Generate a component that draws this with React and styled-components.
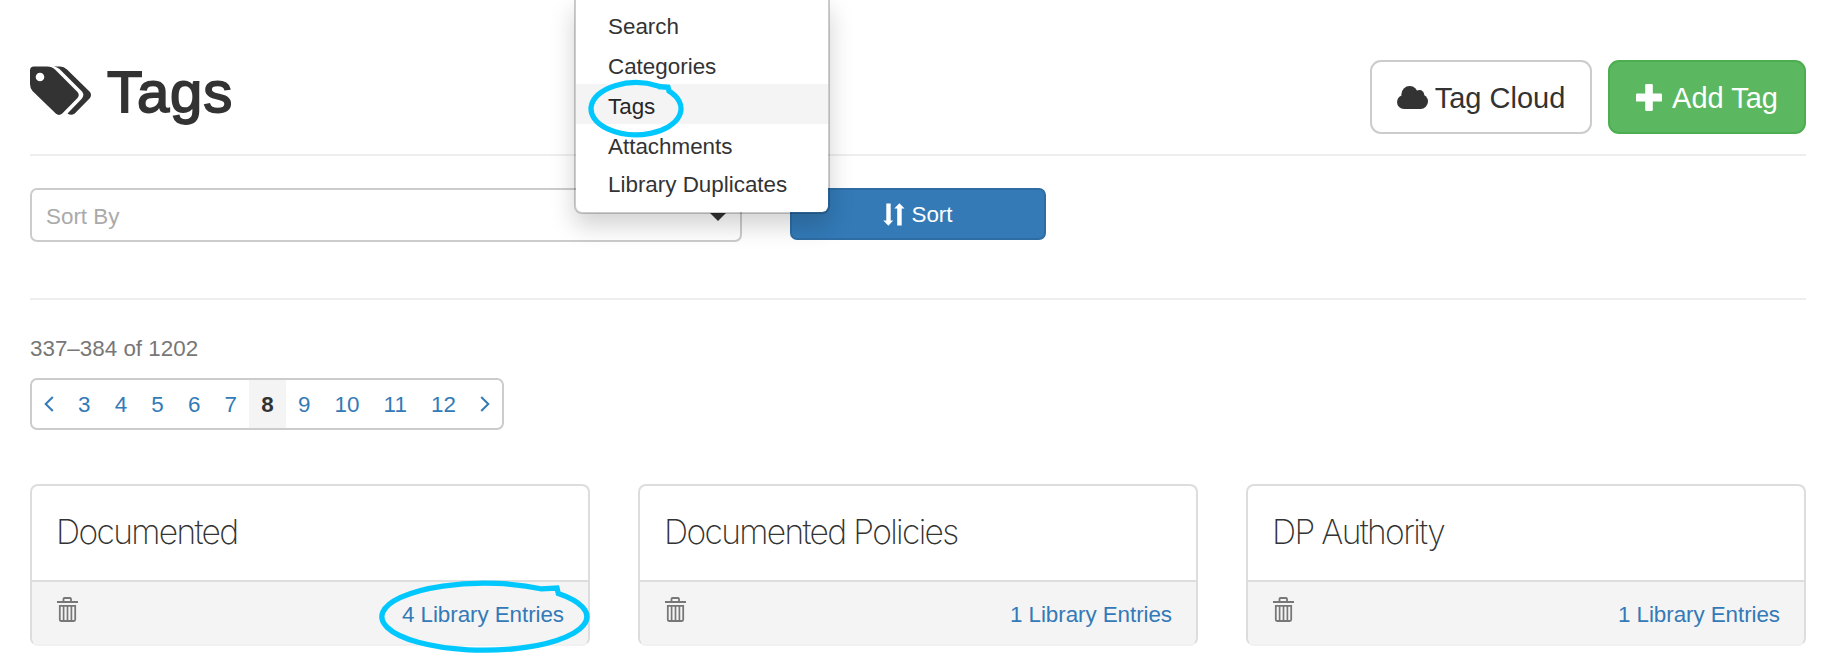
import React from 'react';
import styled, { createGlobalStyle } from 'styled-components';

const colors = {
  text: '#333',
  muted: '#777',
  placeholder: '#aaa',
  link: '#337ab7',
  primary: '#337ab7',
  primaryBorder: '#2e6da4',
  success: '#5cb860',
  successBorder: '#4cae50',
  border: '#ccc',
  cardBorder: '#ddd',
  rule: '#eee',
  shade: '#f4f4f4',
  marker: '#00c8ff',
};

const GlobalStyle = createGlobalStyle`
  * {
    box-sizing: border-box;
  }

  body {
    margin: 0;
    background: #fff;
    color: ${colors.text};
    font-family: "Liberation Sans", Arial, sans-serif;
    font-size: 22.4px;
    overflow: hidden;
    -webkit-font-smoothing: antialiased;
  }
`;

const Page = styled.main`
  position: relative;
  height: 666px;
  padding: 0 18px 0 30px;
  overflow: hidden;
`;

const Header = styled.header`
  display: flex;
  justify-content: space-between;
  height: 156px;
  border-bottom: 2px solid ${colors.rule};
`;

const Title = styled.h1`
  display: flex;
  align-items: center;
  gap: 16px;
  height: 80px;
  margin: 52px 0 0;
  font-size: 58px;
  font-weight: 400;
  letter-spacing: 0.9px;
  line-height: 80px;
  -webkit-text-stroke: 1.8px ${colors.text};

  svg {
    margin-top: -3px;
  }
`;

const Actions = styled.div`
  display: flex;
  gap: 16px;
  padding-top: 60px;
`;

const ActionButton = styled.button`
  display: flex;
  align-items: center;
  justify-content: center;
  gap: ${({ $gap }) => $gap}px;
  width: ${({ $width }) => $width}px;
  height: 74px;
  padding: 0;
  border: 2px solid ${({ $success }) => ($success ? colors.successBorder : colors.border)};
  border-radius: 11px;
  background: ${({ $success }) => ($success ? colors.success : '#fff')};
  color: ${({ $success }) => ($success ? '#fff' : colors.text)};
  font-family: inherit;
  font-size: 29px;
  line-height: 34px;

  span {
    padding-top: 2px;
  }
`;

const Filters = styled.section`
  display: flex;
  gap: 48px;
  height: 144px;
  padding-top: 32px;
  border-bottom: 2px solid ${colors.rule};
`;

const Select = styled.div`
  display: flex;
  align-items: center;
  justify-content: space-between;
  width: 712px;
  height: 54px;
  padding: 3px 14px 0;
  border: 2px solid ${colors.border};
  border-radius: 7px;
  color: ${colors.placeholder};
`;

const Caret = styled.i`
  border: 8px solid transparent;
  border-top-color: ${colors.text};
  border-bottom: 0;
`;

const SortButton = styled.button`
  display: flex;
  align-items: center;
  justify-content: center;
  gap: 6px;
  width: 256px;
  height: 52px;
  padding: 0;
  border: 2px solid ${colors.primaryBorder};
  border-radius: 7px;
  background: ${colors.primary};
  color: #fff;
  font-family: inherit;
  font-size: 22.4px;

  span {
    padding-top: 2px;
  }
`;

const Count = styled.p`
  margin: 35px 0 15px;
  color: ${colors.muted};
  line-height: 28px;
`;

const Pagination = styled.nav`
  display: flex;
  width: 474px;
  height: 52px;
  border: 2px solid ${colors.border};
  border-radius: 7px;
`;

const PageLink = styled.a`
  padding: 0 12.1px;
  background: ${({ $active }) => ($active ? colors.shade : 'transparent')};
  color: ${({ $active }) => ($active ? colors.text : colors.link)};
  font-weight: ${({ $active }) => ($active ? 700 : 400)};
  line-height: 49px;
  height: 48px;
`;

const PageArrow = styled.a`
  display: flex;
  align-items: center;
  justify-content: center;
  width: 34px;
  color: ${colors.link};
`;

const Cards = styled.section`
  display: grid;
  grid-template-columns: repeat(3, 560px);
  gap: 48px;
  margin-top: 54px;
`;

const Card = styled.article`
  height: 162px;
  border: 2px solid ${colors.cardBorder};
  border-bottom-color: #f1f1f1;
  border-radius: 8px;
  overflow: hidden;
`;

const CardTitle = styled.h2`
  height: 94px;
  margin: 0;
  padding-left: 24px;
  font-family: Inter, "Liberation Sans", sans-serif;
  font-size: 33.6px;
  font-weight: 200;
  letter-spacing: -1.65px;
  line-height: 92px;
`;

const CardFooter = styled.footer`
  display: flex;
  justify-content: space-between;
  height: 64px;
  padding: 0 24px 0 25px;
  border-top: 2px solid ${colors.cardBorder};
  background: ${colors.shade};
  color: ${colors.muted};

  svg {
    margin-top: 15px;
  }
`;

const EntriesLink = styled.a`
  color: ${colors.link};
  letter-spacing: -0.06px;
  line-height: 65px;
`;

const Menu = styled.ul`
  position: absolute;
  top: -2px;
  left: 574px;
  width: 256px;
  height: 216px;
  margin: 0;
  padding: 4px 0 0;
  border: 2px solid rgba(0, 0, 0, 0.2);
  border-radius: 0 0 8px 8px;
  background: #fff;
  background-clip: padding-box;
  box-shadow: 0 12px 24px rgba(0, 0, 0, 0.175);
  list-style: none;
`;

const MenuItem = styled.li`
  height: ${({ $last }) => ($last ? 36 : 40)}px;
  padding: 5px 0 0 32px;
  background: ${({ $active }) => ($active ? colors.shade : 'transparent')};
  color: ${({ $active }) => ($active ? '#262626' : colors.text)};
  line-height: ${({ $last }) => ($last ? 32 : 36)}px;
`;

const Marker = styled.svg`
  position: absolute;
  top: ${({ $top }) => $top}px;
  left: ${({ $left }) => $left}px;
  fill: none;
  stroke: ${colors.marker};
  stroke-width: 5.3;
`;

const TagsIcon = () => (
  <svg width="61" height="49" viewBox="0 0 61 49" fill="currentColor" stroke="none">
    <path
      fillRule="evenodd"
      d="M4 .5H17Q22 .5 25 3.5L47.5 26Q50 29 47.5 32L32 47.8Q29 50 26 47.8L2.5 25Q0 22 0 18V4.5Q0 .5 4 .5ZM10 6.7A4.3 4.3 0 1 0 10 15.3A4.3 4.3 0 1 0 10 6.7Z"
    />
    <path d="M24 .5H30Q34 .5 37 3.5L60 26Q62 29 60 32L44.5 47.8Q41 50 37.5 47.5L51.5 33Q55 29 52 25.5L29.5 3Q27.5 1 24 .5Z" />
  </svg>
);

const CloudIcon = () => (
  <svg width="31" height="23" viewBox="0 0 31 23" fill="currentColor">
    <circle cx="12.7" cy="8.3" r="8.3" />
    <circle cx="22.5" cy="8.7" r="4.7" />
    <circle cx="7" cy="16" r="7" />
    <circle cx="23.5" cy="15.5" r="7.5" />
    <path d="M7 9h17v14H7z" />
  </svg>
);

const PlusIcon = () => (
  <svg width="26" height="27" viewBox="0 0 26 27" fill="currentColor">
    <rect x="0" y="9.4" width="26" height="8.2" rx="1.2" />
    <rect x="9.2" y="0" width="7.6" height="27" rx="1.2" />
  </svg>
);

const SortIcon = () => (
  <svg width="22" height="23" viewBox="0 0 22 23" fill="currentColor">
    <path d="M3.3.5H7.7V17.5H10.2L5.4 22.8L.3 17.5H3.3Z" />
    <path d="M14.2 22.5H18.7V5.5H21.5L16.4.2L11.3 5.5H14.2Z" />
  </svg>
);

const TrashIcon = () => (
  <svg width="21" height="25" viewBox="0 0 21 25" fill="none" stroke="currentColor">
    <path d="M0 5H21" strokeWidth="2" />
    <path d="M6.5 4V2Q6.5 1 7.5 1H13Q14 1 14 2V4" strokeWidth="1.8" />
    <path d="M2.8 8.8H18.2V22.5Q18.2 24 16.7 24H4.3Q2.8 24 2.8 22.5Z" strokeWidth="1.8" />
    <path d="M6.6 9V23.5M10.5 9V23.5M14.4 9V23.5" strokeWidth="1.7" />
  </svg>
);

const Chevron = ({ right }) => (
  <svg width="10" height="16" viewBox="0 0 10 16" fill="none" stroke="currentColor" strokeWidth="2">
    <path d={right ? 'M1.2 1L8.3 8L1.2 15' : 'M8.8 1L1.7 8L8.8 15'} />
  </svg>
);

const menuItems = ['Search', 'Categories', 'Tags', 'Attachments', 'Library Duplicates'];
const pages = [3, 4, 5, 6, 7, 8, 9, 10, 11, 12];
const tags = [
  { name: 'Documented', entries: 4 },
  { name: 'Documented Policies', entries: 1 },
  { name: 'DP Authority', entries: 1 },
];

const App = () => {
  return (
    <Page>
      <GlobalStyle />
      <Header>
        <Title>
          <TagsIcon />
          Tags
        </Title>
        <Actions>
          <ActionButton $width={222} $gap={7}>
            <CloudIcon />
            <span>Tag Cloud</span>
          </ActionButton>
          <ActionButton $width={198} $gap={10} $success>
            <PlusIcon />
            <span>Add Tag</span>
          </ActionButton>
        </Actions>
      </Header>

      <Filters>
        <Select>
          Sort By
          <Caret />
        </Select>
        <SortButton>
          <SortIcon />
          <span>Sort</span>
        </SortButton>
      </Filters>

      <Count>337–384 of 1202</Count>
      <Pagination>
        <PageArrow>
          <Chevron />
        </PageArrow>
        {pages.map(page => (
          <PageLink key={page} $active={page === 8}>{page}</PageLink>
        ))}
        <PageArrow>
          <Chevron right />
        </PageArrow>
      </Pagination>

      <Cards>
        {tags.map(({ name, entries }) => (
          <Card key={name}>
            <CardTitle>{name}</CardTitle>
            <CardFooter>
              <TrashIcon />
              <EntriesLink>{entries} Library Entries</EntriesLink>
            </CardFooter>
          </Card>
        ))}
      </Cards>

      <Menu>
        {menuItems.map((item, index) => (
          <MenuItem key={item} $active={item === 'Tags'} $last={index === menuItems.length - 1}>
            {item}
          </MenuItem>
        ))}
      </Menu>

      <Marker $left={586} $top={78} width="100" height="62" viewBox="586 78 100 62">
        <path d="M658 86.5L668 87.3L669 91A45 26 0 1 1 658 86L667 87.5" />
      </Marker>
      <Marker $left={378} $top={578} width="215" height="78" viewBox="378 578 215 78">
        <path d="M541 588.8L557 588L558.3 593.5A102.5 33.5 0 1 1 542 589" />
      </Marker>
    </Page>
  );
};

export default App;
